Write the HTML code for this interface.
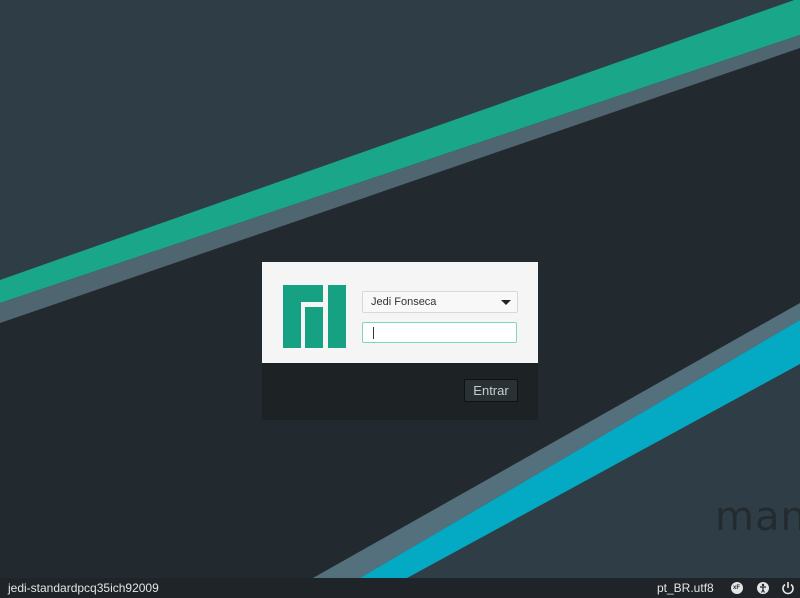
<!DOCTYPE html>
<html><head><meta charset="utf-8"><style>
html,body{margin:0;padding:0;width:800px;height:598px;overflow:hidden;background:#2f3e46;font-family:"Liberation Sans",sans-serif}
svg.bg{position:absolute;left:0;top:0}
.box{position:absolute;left:262px;top:262px;width:276px;height:158px;background:#1d2225}
.light{position:absolute;left:0;top:0;width:276px;height:101px;background:#f5f5f5}
.logo div{position:absolute;background:#17a183}
.combo{position:absolute;left:100px;top:29px;height:20px;border:1px solid #d8d8d8;border-radius:2px;background:#f8f8f8;font-size:11px;color:#333;line-height:20px;padding-left:8px;box-sizing:content-box;width:146px}
.arrow{position:absolute;right:6px;top:8px;width:0;height:0;border-left:5px solid transparent;border-right:5px solid transparent;border-top:5px solid #222}
.pw{position:absolute;left:100px;top:60px;width:153px;height:19px;border:1px solid #7fd6c0;border-radius:2px;background:#fff}
.cur{position:absolute;left:10px;top:4px;width:1px;height:12px;background:#333}
.btn{position:absolute;left:202px;top:117px;width:52px;height:21px;border:1px solid #0f1214;border-radius:2px;background:#2a3134;color:#c8cccc;font-size:13px;text-align:center;line-height:21px}
.bar{position:absolute;left:0;top:578px;width:800px;height:20px;background:#1e2427;color:#e4e6e6;font-size:12px;line-height:20px}
.man{position:absolute;left:715px;top:494px;font-size:40px;color:#242b30;letter-spacing:1px;font-family:"DejaVu Sans",sans-serif}
.ic{position:absolute;top:582px;width:12px;height:12px;border-radius:50%;background:#e4e6e6}
</style></head><body>
<svg class="bg" width="800" height="598">
<polygon points="0,303 800,35 800,598 0,598" fill="#232a2f"/>
<polygon points="0,280 800,-2 800,35 0,303" fill="#1aa689"/>
<polygon points="0,303 800,35 800,48 0,323" fill="#4f6570"/>
<polygon points="313,578 800,303 800,598 313,598" fill="#2f3e46"/>
<polygon points="313,578 800,303 800,320 360,578" fill="#53707c"/>
<polygon points="360,578 800,320 800,364 407,578" fill="#04aac4"/>
</svg>
<div class="man">man</div>
<div class="box">
<div class="light">
<div class="logo">
<div style="left:21px;top:23px;width:40px;height:17px"></div>
<div style="left:21px;top:23px;width:18px;height:63px"></div>
<div style="left:43px;top:45px;width:18px;height:41px"></div>
<div style="left:66px;top:23px;width:18px;height:63px"></div>
</div>
<div class="combo">Jedi Fonseca<div class="arrow"></div></div>
<div class="pw"><div class="cur"></div></div>
</div>
<div class="btn">Entrar</div>
</div>
<div class="bar"><span style="position:absolute;left:8px">jedi-standardpcq35ich92009</span><span style="position:absolute;left:657px">pt_BR.utf8</span></div>
<div class="ic" style="left:731px"><span style="position:absolute;left:2px;top:0;font-size:6px;line-height:12px;color:#1e2427;font-weight:bold">xF</span></div>
<div class="ic" style="left:757px"><svg width="12" height="12" style="position:absolute;left:0;top:0"><circle cx="6" cy="3" r="1.2" fill="#1e2427"/><path d="M3 5H9M6 5V8M6 8L4.5 10.5M6 8L7.5 10.5" stroke="#1e2427" stroke-width="1.2" fill="none"/></svg></div>
<svg style="position:absolute;left:781px;top:581px" width="14" height="14"><path d="M4 3.5A5 5 0 1 0 10 3.5" fill="none" stroke="#e4e6e6" stroke-width="1.6"/><path d="M7 1V7" stroke="#e4e6e6" stroke-width="1.6"/></svg>
</body></html>
